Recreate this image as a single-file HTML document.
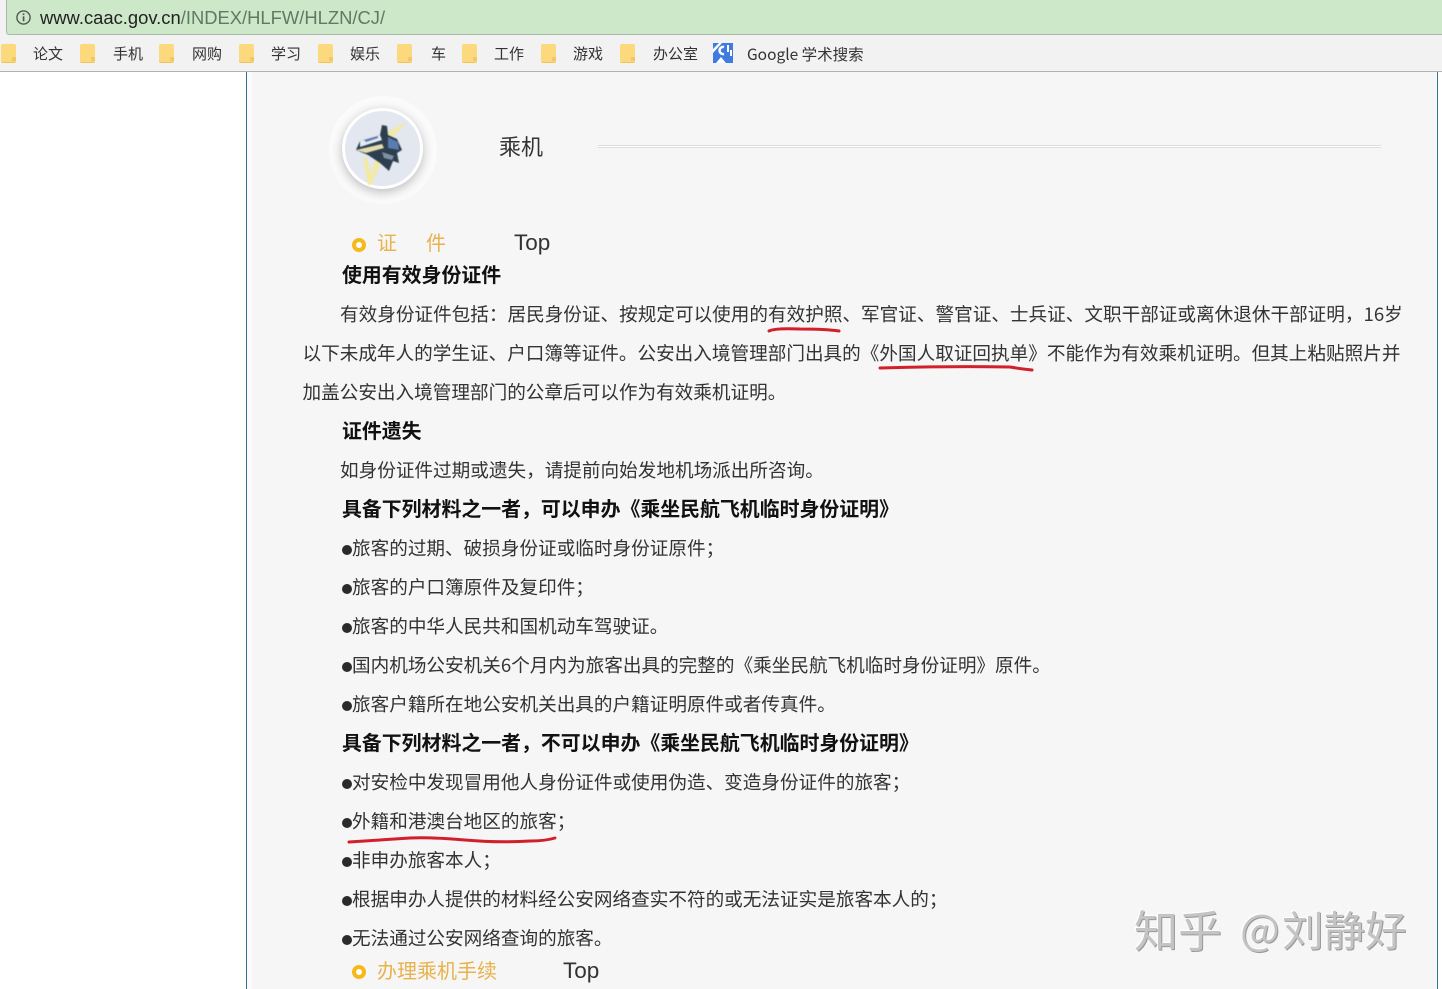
<!DOCTYPE html>
<html lang="zh-CN">
<head>
<meta charset="utf-8">
<style>
html,body{margin:0;padding:0;background:#fff}
body{position:relative;width:1442px;height:989px;overflow:hidden;font-family:"Liberation Sans","Noto Sans CJK SC",sans-serif;color:#333}
.a{position:absolute;white-space:nowrap}
.l{position:absolute;white-space:nowrap;font-size:18.61px;line-height:30px;height:30px;color:#333;font-family:"Noto Sans CJK SC",sans-serif;font-weight:400}
.d{left:352px}
.d:before{content:"";position:absolute;left:-10px;top:12px;width:10px;height:10px;border-radius:50%;background:#2a2a2a}
.b{position:absolute;white-space:nowrap;font-size:19.9px;line-height:30px;height:30px;color:#111;font-weight:700;font-family:"Noto Sans CJK SC",sans-serif}
.bm{position:absolute;top:43.5px;font-size:15px;line-height:20px;color:#333;white-space:nowrap;font-family:"Noto Sans CJK SC",sans-serif}
.f{position:absolute;top:44px;width:15px;height:18px;background:#fdd97e;border-radius:2px;border:0 solid #eec460;border-bottom-width:1px}
.f:after{content:"";position:absolute;right:0;bottom:1px;width:4px;height:4px;background:#f2c765}
.g{color:#e8b24c;font-size:20px;line-height:30px;font-family:"Noto Sans CJK SC",sans-serif}
.dot{position:absolute;width:6px;height:6px;border:4px solid #f7b81c;border-radius:50%;background:#fff}
.top{font-size:22.5px;line-height:30px;color:#333;font-family:"Liberation Sans",sans-serif}
.w{position:absolute;white-space:nowrap;color:#c4c4c4;text-shadow:1px 1px 0 #999,-1px -1px 0 #fff;font-family:'Noto Sans CJK SC',sans-serif}
</style>
</head>
<body>
<div class="a" style="left:0;top:0;width:1442px;height:71px;background:#f2f2f2;border-bottom:1px solid #b0b0b0"></div>
<div class="a" style="left:6px;top:-2px;width:1440px;height:37px;background:#cde8c9;border:1px solid #a9b8a8;border-radius:3px;box-sizing:border-box"></div>
<svg class="a" style="left:15px;top:9px" width="17" height="17" viewBox="0 0 17 17"><circle cx="8.5" cy="8.5" r="6.6" fill="none" stroke="#555" stroke-width="1.4"/><rect x="7.7" y="7.3" width="1.7" height="5" fill="#555"/><rect x="7.7" y="4.4" width="1.7" height="1.7" fill="#555"/></svg>
<div class="a" style="left:40px;top:6px;font-size:18.4px;line-height:24px;color:#222;font-family:'Liberation Sans',sans-serif">www.caac.gov.cn<span style="color:#5f7a62">/INDEX/HLFW/HLZN/CJ/</span></div>

<div class="f" style="left:1px"></div><div class="bm" style="left:33px">论文</div>
<div class="f" style="left:80px"></div><div class="bm" style="left:113px">手机</div>
<div class="f" style="left:159px"></div><div class="bm" style="left:192px">网购</div>
<div class="f" style="left:239px"></div><div class="bm" style="left:271px">学习</div>
<div class="f" style="left:318px"></div><div class="bm" style="left:350px">娱乐</div>
<div class="f" style="left:397px"></div><div class="bm" style="left:431px">车</div>
<div class="f" style="left:462px"></div><div class="bm" style="left:494px">工作</div>
<div class="f" style="left:541px"></div><div class="bm" style="left:573px">游戏</div>
<div class="f" style="left:620px"></div><div class="bm" style="left:653px">办公室</div>
<svg class="a" style="left:713px;top:43px" width="20" height="20" viewBox="0 0 20 20"><rect width="20" height="20" fill="#3f7be0"/><path d="M0 6 L6 0 H9 L0 10Z M3 20 L8 14 L13 20Z" fill="#fff"/><path d="M11 4 A3.6 3.6 0 1 0 11 11" fill="none" stroke="#fff" stroke-width="2.4"/><path d="M15 2 V9 M18 7 V13" stroke="#fff" stroke-width="2"/></svg>
<div class="bm" style="left:747px;font-size:15.5px">Google 学术搜索</div>

<div class="a" style="left:246px;top:72px;width:1px;height:917px;background:#2f6f8f"></div>
<div class="a" style="left:247px;top:72px;width:1189px;height:917px;background:#f6f6f6;border-left:5px solid #fbfbfb;box-sizing:border-box"></div>
<div class="a" style="left:1436px;top:72px;width:6px;height:917px;background:#fff"></div>
<div class="a" style="left:1437px;top:72px;width:1px;height:917px;background:#2f6f8f"></div>

<div class="a" style="left:329px;top:96px;width:108px;height:108px;border-radius:50%;background:#fbfbfb"></div>
<div class="a" style="left:342px;top:108px;width:81px;height:81px;border-radius:50%;background:#e3e7f0;border:3px solid #fff;box-sizing:border-box;box-shadow:0 3px 11px rgba(0,0,0,.26)"></div>
<svg class="a" style="left:342px;top:108px" width="81" height="81" viewBox="0 0 81 81">
<g style="filter:blur(.4px)">
<path d="M65 14 L45 24 L42 32 L50 30Z" fill="#f2eaa4"/>
<path d="M21 50 L26 77 L30 76 L40 52 L34 50 L29 66 L25 50Z" fill="#f2eaa4"/>
<path d="M14 42 L18 33 L38 27 L40 17 L45 18 L46 27 L55 31 L60 42 L55 45 L57 55 L51 53 L47 63 L38 55 L26 47Z" fill="#2d3f4f"/>
<path d="M18 33 L38 27 L40 32 L18 39Z" fill="#e6eaf0"/>
<path d="M22 32 L36 28 L36 30 L24 34Z" fill="#5a7cb0"/>
<path d="M46 29 L56 34 L57 42 L46 40Z" fill="#5a7cb0"/>
<path d="M14 42 L40 36 L42 40 L24 45Z" fill="#e5ddb0"/>
<path d="M40 44 L52 48 L50 52 L42 50Z" fill="#7d91a3"/>
</g>
</svg>

<div class="a" style="left:499px;top:130px;font-size:22px;line-height:32px;color:#333;font-family:'Noto Sans CJK SC',sans-serif">乘机</div>
<div class="a" style="left:598px;top:145px;width:783px;height:3px;background:#fff;border-top:1px solid #dedede;border-bottom:1px solid #dedede;box-sizing:border-box"></div>

<div class="dot" style="left:352px;top:238px"></div>
<div class="a g" style="left:377px;top:227px">证</div>
<div class="a g" style="left:426px;top:227px">件</div>
<div class="a top" style="left:514px;top:228px">Top</div>

<div class="b" style="left:342px;top:259px">使用有效身份证件</div>
<div class="l" style="left:340px;top:299px">有效身份证件包括：居民身份证、按规定可以使用的有效护照、军官证、警官证、士兵证、文职干部证或离休退休干部证明，16岁</div>
<div class="l" style="left:302.5px;top:338px">以下未成年人的学生证、户口簿等证件。公安出入境管理部门出具的《外国人取证回执单》不能作为有效乘机证明。但其上粘贴照片并</div>
<div class="l" style="left:302.5px;top:377px">加盖公安出入境管理部门的公章后可以作为有效乘机证明。</div>
<div class="b" style="left:342px;top:415px">证件遗失</div>
<div class="l" style="left:340px;top:455px">如身份证件过期或遗失，请提前向始发地机场派出所咨询。</div>
<div class="b" style="left:342px;top:493px">具备下列材料之一者，可以申办《乘坐民航飞机临时身份证明》</div>
<div class="l d" style="top:533px">旅客的过期、破损身份证或临时身份证原件；</div>
<div class="l d" style="top:572px">旅客的户口簿原件及复印件；</div>
<div class="l d" style="top:611px">旅客的中华人民共和国机动车驾驶证。</div>
<div class="l d" style="top:650px">国内机场公安机关6个月内为旅客出具的完整的《乘坐民航飞机临时身份证明》原件。</div>
<div class="l d" style="top:689px">旅客户籍所在地公安机关出具的户籍证明原件或者传真件。</div>
<div class="b" style="left:342px;top:727px">具备下列材料之一者，不可以申办《乘坐民航飞机临时身份证明》</div>
<div class="l d" style="top:767px">对安检中发现冒用他人身份证件或使用伪造、变造身份证件的旅客；</div>
<div class="l d" style="top:806px">外籍和港澳台地区的旅客；</div>
<div class="l d" style="top:845px">非申办旅客本人；</div>
<div class="l d" style="top:884px">根据申办人提供的材料经公安网络查实不符的或无法证实是旅客本人的；</div>
<div class="l d" style="top:923px">无法通过公安网络查询的旅客。</div>

<div class="dot" style="left:352px;top:965px"></div>
<div class="a g" style="left:377px;top:955px">办理乘机手续</div>
<div class="a top" style="left:563px;top:956px">Top</div>

<svg class="a" style="left:0;top:0;pointer-events:none" width="1442" height="989" viewBox="0 0 1442 989">
<path d="M769 331 Q775 328 800 329 Q825 329 839 331" fill="none" stroke="#d2202a" stroke-width="3" stroke-linecap="round"/>
<path d="M880 368 Q950 366 1010 367 Q1022 369 1032 370" fill="none" stroke="#d2202a" stroke-width="3" stroke-linecap="round"/>
<path d="M349 842 Q380 840 410 838 Q430 837 465 840 Q500 843 530 841 Q545 841 555 838" fill="none" stroke="#d2202a" stroke-width="3" stroke-linecap="round"/>
</svg>

<div class="w" style="left:1134px;top:899px;font-size:44px;line-height:58px">知乎</div>
<div class="w" style="left:1240px;top:899px;font-size:42px;line-height:58px">@</div>
<div class="w" style="left:1282px;top:899px;font-size:41.5px;line-height:58px">刘静好</div>
</body>
</html>
